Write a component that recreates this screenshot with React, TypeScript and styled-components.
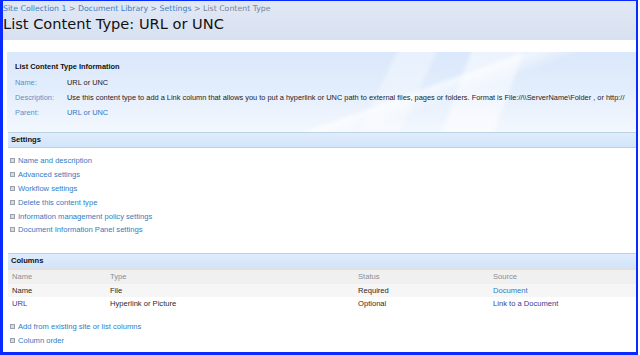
import styled, { createGlobalStyle } from 'styled-components'

const Global = createGlobalStyle`
  html, body { margin: 0; padding: 0; background: #fff; }
  body { font-family: "DejaVu Sans", "Liberation Sans", sans-serif; }
`

const Frame = styled.div`
  box-sizing: border-box;
  width: 638px;
  height: 355px;
  border-left: 3px solid #0a2bff;
  border-top: 1px solid #0a2bff;
  border-right: 2px solid #0a2bff;
  border-bottom: 3px solid #0a2bff;
  overflow: hidden;
  background: #fff;
`

const TitleBand = styled.div`
  height: 39px;
  padding: 2px 0 0 0;
  box-sizing: border-box;
  background: linear-gradient(#e1e8f5, #d8e1f1);
`

const Crumbs = styled.div`
  font-size: 7.8px;
  color: #7a8594;
  line-height: 11px;
  a { color: #3d7fc1; text-decoration: none; }
`

const PageTitle = styled.h1`
  margin: 0;
  font-family: "DejaVu Sans", sans-serif;
  font-weight: normal;
  font-size: 14.6px;
  line-height: 20px;
  color: #111;
`

const Body = styled.div`
  padding: 12px 0 0 4px;
`

const InfoPanel = styled.div`
  height: 80px;
  padding: 9px 0 0 8px;
  box-sizing: border-box;
  background:
    linear-gradient(160deg, transparent 60%, rgba(255,255,255,0.6) 62%, transparent 68%),
    linear-gradient(115deg, transparent 58%, rgba(255,255,255,0.35) 59%, rgba(255,255,255,0.35) 64%, transparent 65%),
    linear-gradient(110deg, transparent 70%, rgba(255,255,255,0.5) 71%, rgba(255,255,255,0.5) 78%, transparent 79%),
    linear-gradient(180deg, #dae8fb 0%, #e2edfc 45%, #f4f8fe 100%);
  font-family: "Liberation Sans", sans-serif;
  font-size: 7.4px;
`

const InfoHeading = styled.div`
  font-weight: bold;
  color: #111;
  line-height: 12px;
  margin-bottom: 2px;
`

const InfoRow = styled.div`
  display: grid;
  grid-template-columns: 52px 1fr;
  line-height: 15px;
  white-space: nowrap;
`

const InfoLabel = styled.span`
  color: #5d8fc6;
`

const InfoValue = styled.span<{ $link?: boolean }>`
  color: ${p => (p.$link ? '#2a78c2' : '#222')};
`

const SectionBar = styled.div<{ $gap?: number }>`
  margin-top: ${p => p.$gap ?? 0}px;
  margin-left: 1px;
  height: 16px;
  box-sizing: border-box;
  border-top: 1px solid #bcd3e6;
  border-bottom: 1px solid #bcd3e6;
  background: linear-gradient(#dfecfc, #d2e5fa);
  font-family: "Liberation Sans", sans-serif;
  font-weight: bold;
  font-size: 7.6px;
  line-height: 14px;
  padding-left: 3px;
  color: #111;
`

const LinkList = styled.ul<{ $gap: number }>`
  list-style: none;
  margin: ${p => p.$gap}px 0 0 0;
  padding: 0 0 0 3px;
  font-family: "Liberation Sans", sans-serif;
  font-size: 7.6px;
`

const LinkItem = styled.li`
  display: flex;
  align-items: center;
  gap: 3px;
  height: 13.8px;
  color: #2f7cc4;
`

const Bullet = styled.span`
  width: 3px;
  height: 3px;
  border: 0.5px solid #9aa3ad;
  background: #d6dbe0;
`

const Table = styled.table`
  width: calc(100% - 1px);
  margin-top: -1px;
  margin-left: 1px;
  border-collapse: collapse;
  font-family: "Liberation Sans", sans-serif;
  font-size: 7.6px;
  th, td { text-align: left; font-weight: normal; padding: 0 0 0 4px; height: 13px; }
  th { color: #8a8f96; background: #f0f0f0; border-top: 2px solid #e0e0e0; height: 14px; }
  tbody tr:nth-child(odd) { background: #f6f6f6; }
`

const Cell = styled.td<{ $tone?: 'link' | 'visited' }>`
  color: ${p => (p.$tone === 'link' ? '#2f7cc4' : p.$tone === 'visited' ? '#3c3a8f' : '#2a2a2a')};
`

const settings = [
  'Name and description',
  'Advanced settings',
  'Workflow settings',
  'Delete this content type',
  'Information management policy settings',
  'Document Information Panel settings',
]

export default function App() {
  return (
    <>
      <Global />
      <Frame>
        <TitleBand>
          <Crumbs>
            <a>Site Collection 1</a> &gt; <a>Document Library</a> &gt; <a>Settings</a> &gt; List Content Type
          </Crumbs>
          <PageTitle>List Content Type: URL or UNC</PageTitle>
        </TitleBand>
        <Body>
          <InfoPanel>
            <InfoHeading>List Content Type Information</InfoHeading>
            <InfoRow>
              <InfoLabel>Name:</InfoLabel>
              <InfoValue>URL or UNC</InfoValue>
            </InfoRow>
            <InfoRow>
              <InfoLabel>Description:</InfoLabel>
              <InfoValue>
                Use this content type to add a Link column that allows you to put a hyperlink or UNC path to external files, pages or folders. Format is File://\\ServerName\Folder , or http://
              </InfoValue>
            </InfoRow>
            <InfoRow>
              <InfoLabel>Parent:</InfoLabel>
              <InfoValue $link>URL or UNC</InfoValue>
            </InfoRow>
          </InfoPanel>
          <SectionBar>Settings</SectionBar>
          <LinkList $gap={6}>
            {settings.map(s => (
              <LinkItem key={s}>
                <Bullet />
                {s}
              </LinkItem>
            ))}
          </LinkList>
          <SectionBar $gap={16}>Columns</SectionBar>
          <Table>
            <colgroup>
              <col style={{ width: 98 }} />
              <col style={{ width: 248 }} />
              <col style={{ width: 135 }} />
              <col />
            </colgroup>
            <thead>
              <tr>
                <th>Name</th>
                <th>Type</th>
                <th>Status</th>
                <th>Source</th>
              </tr>
            </thead>
            <tbody>
              <tr>
                <Cell>Name</Cell>
                <Cell>File</Cell>
                <Cell>Required</Cell>
                <Cell $tone="link">Document</Cell>
              </tr>
              <tr>
                <Cell $tone="visited">URL</Cell>
                <Cell>Hyperlink or Picture</Cell>
                <Cell>Optional</Cell>
                <Cell $tone="visited">Link to a Document</Cell>
              </tr>
            </tbody>
          </Table>
          <LinkList $gap={10}>
            <LinkItem>
              <Bullet />
              Add from existing site or list columns
            </LinkItem>
            <LinkItem>
              <Bullet />
              Column order
            </LinkItem>
          </LinkList>
        </Body>
      </Frame>
    </>
  )
}
